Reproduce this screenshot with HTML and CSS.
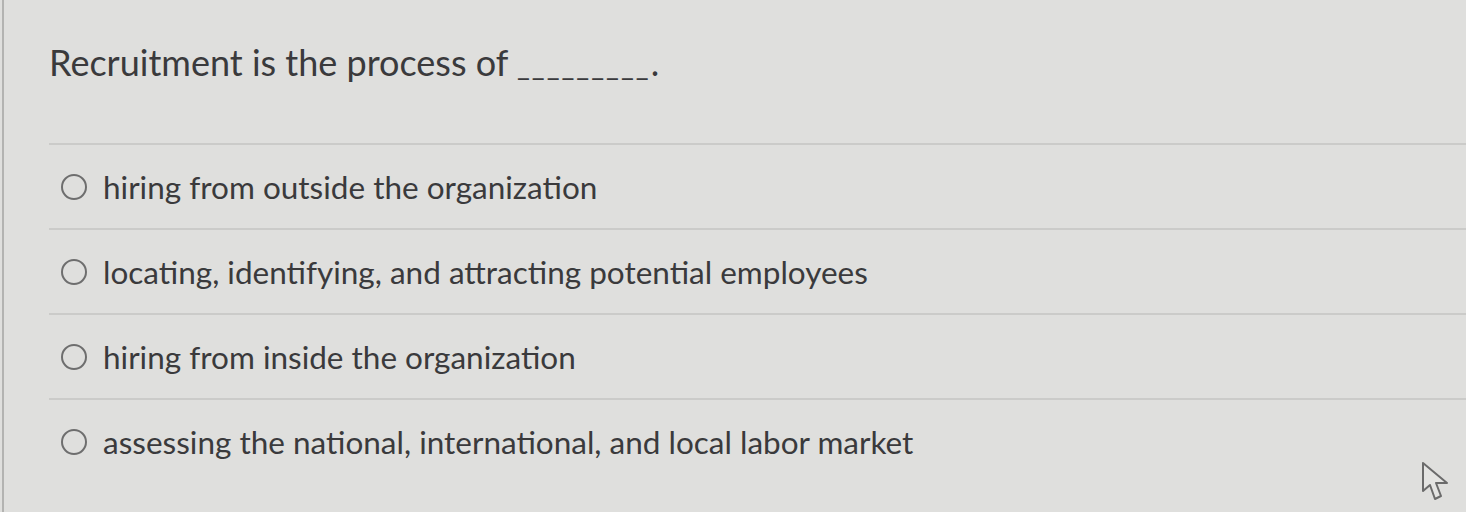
FILE: index.html
```html
<!DOCTYPE html>
<html lang="en">
<head>
  <meta charset="UTF-8" />
  <title>Quiz Question</title>
  <link rel="stylesheet" href="styles.css">
</head>
<body>
  <div class="question">
    <div class="question-text">Recruitment is the process of <span class="blank">_________</span>.</div>

    <div class="answers">
      <label class="answer"><span class="radio"></span><span>hiring from outside the organization</span></label>
      <label class="answer"><span class="radio"></span><span>locating, identifying, and attracting potential employees</span></label>
      <label class="answer"><span class="radio"></span><span>hiring from inside the organization</span></label>
      <label class="answer"><span class="radio"></span><span>assessing the national, international, and local labor market</span></label>
    </div>
  </div>

  <svg class="cursor" width="30" height="42" viewBox="0 0 30 42">
    <path d="M2 2 L2 30 L9 24 L14 38 L20 35 L15 22 L26 22 Z" fill="#e4e4e2" stroke="#6b6b6b" stroke-width="2" stroke-linejoin="round"/>
  </svg>
</body>
</html>
```

FILE: styles.css
```css
* { box-sizing: border-box; }

body {
  margin: 0;
  height: 512px;
  overflow: hidden;
  font-family: Lato, "Open Sans", sans-serif;
  color: #3a3a3c;
  background: #dfdfdd;
}

.question {
  margin-left: 2px;
  height: 512px;
  border-left: 2px solid #b3b3b1;
  padding: 38px 0 0 45px;
}

.question-text {
  font-size: 36px;
  line-height: 48px;
  height: 105px;
}

.blank {
  font-size: 28px;
  letter-spacing: 2px;
}

.answer {
  display: flex;
  align-items: center;
  height: 85px;
  border-top: 2px solid #cbcbc9;
  font-size: 31.5px;
}

.radio {
  width: 26px;
  height: 26px;
  margin: 0 16px 0 12px;
  border: 2px solid #6e6e6e;
  border-radius: 50%;
  flex-shrink: 0;
}

.cursor {
  position: absolute;
  left: 1421px;
  top: 461px;
}
```
